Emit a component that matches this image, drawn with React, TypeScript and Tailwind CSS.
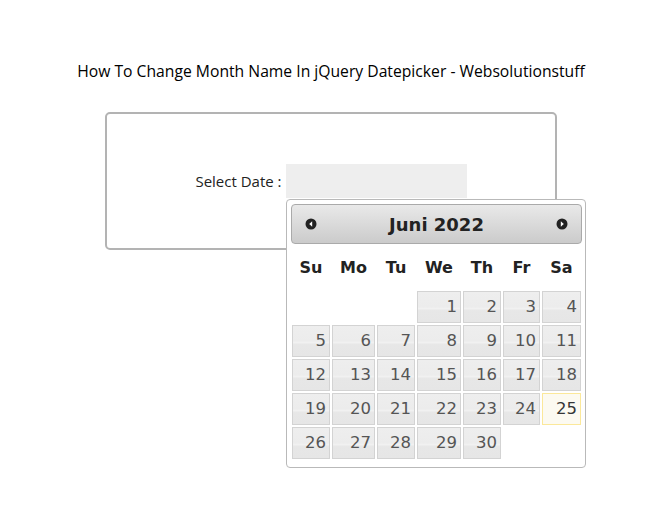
import React from "react";

const weeks: (number | null)[][] = [
  [null, null, null, 1, 2, 3, 4],
  [5, 6, 7, 8, 9, 10, 11],
  [12, 13, 14, 15, 16, 17, 18],
  [19, 20, 21, 22, 23, 24, 25],
  [26, 27, 28, 29, 30, null, null],
];

const days = ["Su", "Mo", "Tu", "We", "Th", "Fr", "Sa"];

function CircleArrow({ dir }: { dir: "w" | "e" }) {
  return (
    <svg width="12" height="12" viewBox="0 0 12 12">
      <circle cx="6" cy="6" r="5.5" fill="#222" />
      {dir === "w" ? (
        <polygon points="7.2,3.2 7.2,8.8 4.2,6" fill="#fff" />
      ) : (
        <polygon points="4.8,3.2 4.8,8.8 7.8,6" fill="#fff" />
      )}
    </svg>
  );
}

export default function App() {
  return (
    <div className="relative w-[652px] h-[509px] bg-white overflow-hidden font-['Open_Sans','Noto_Sans',sans-serif] text-black">
      <h1 className="pt-[60px] pl-[10px] text-center text-[15.7px] leading-[22px] font-normal">
        How To Change Month Name In jQuery Datepicker - Websolutionstuff
      </h1>
      <div className="ml-[105px] mt-[30px] w-[452px] h-[138px] border-2 border-[#b3b3b3] rounded-[5px] flex items-center justify-center gap-[4px]">
        <span className="text-[15px] text-[#222]">Select Date :</span>
        <div className="w-[181px] h-[34px] bg-[#eeeeee]" />
      </div>

      <div className="absolute left-[286px] top-[199px] w-[300px] h-[269px] bg-white border border-[#b9b9b9] rounded-[4px] pt-[4px] pl-[4px] pr-[3px] font-['DejaVu_Sans',sans-serif]">
        <div className="h-[40px] w-[291px] rounded-[4px] border border-[#aaaaaa] bg-[linear-gradient(to_bottom,#e9e9e9,#cbcbcb)] flex items-center justify-between px-[13px]">
          <CircleArrow dir="w" />
          <span className="text-[18px] font-bold text-[#222]">Juni 2022</span>
          <CircleArrow dir="e" />
        </div>
        <div className="pl-[1px]">
          <div className="grid grid-cols-[38px_43px_38px_44px_38px_37px_39px] gap-x-[2px] h-[47px] pt-[1px] items-center">
            {days.map((d) => (
              <div key={d} className="text-center text-[16px] font-bold text-[#222]">
                {d}
              </div>
            ))}
          </div>
          <div className="grid grid-cols-[38px_43px_38px_44px_38px_37px_39px] gap-[2px] auto-rows-[32px]">
            {weeks.flat().map((d, i) =>
              d === null ? (
                <div key={i} />
              ) : d === 25 ? (
                <div
                  key={i}
                  className="border border-[#fbe89a] bg-[#fcfaf1] text-[#363636] text-right pr-[3px] text-[16.5px] leading-[30px]"
                >
                  {d}
                </div>
              ) : (
                <div
                  key={i}
                  className="border border-[#d3d3d3] bg-[linear-gradient(to_bottom,#eeeeee_0%,#ececec_50%,#f1f1f1_55%,#e7e7e7_62%,#e6e6e6_100%)] text-[#555] text-right pr-[3px] text-[16.5px] leading-[30px]"
                >
                  {d}
                </div>
              )
            )}
          </div>
        </div>
      </div>
    </div>
  );
}
